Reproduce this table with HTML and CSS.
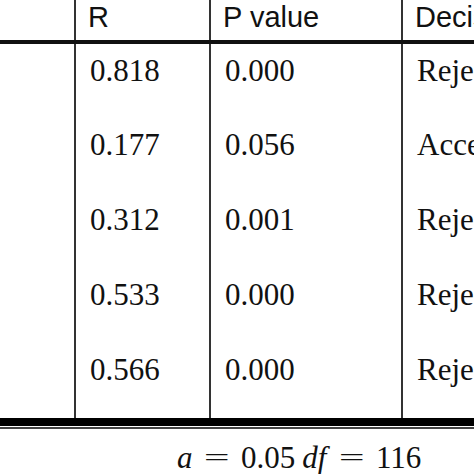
FILE: index.html
```html
<!DOCTYPE html>
<html lang="en">
<head>
    <meta charset="UTF-8">
    <title>Correlation test</title>
    <link rel="stylesheet" href="styles.css">
</head>
<body>
    <div class="stats-table">
        <!-- header -->
        <div class="row head">
            <div class="cell first"></div>
            <div class="cell col-r">R</div>
            <div class="cell col-p">P value</div>
            <div class="cell col-d">Decision</div>
        </div>

        <div class="row">
            <div class="cell first"></div>
            <div class="cell col-r">0.818</div>
            <div class="cell col-p">0.000</div>
            <div class="cell col-d">Reject</div>
        </div>
        <div class="row">
            <div class="cell first"></div>
            <div class="cell col-r">0.177</div>
            <div class="cell col-p">0.056</div>
            <div class="cell col-d">Accept</div>
        </div>
        <div class="row">
            <div class="cell first"></div>
            <div class="cell col-r">0.312</div>
            <div class="cell col-p">0.001</div>
            <div class="cell col-d">Reject</div>
        </div>
        <div class="row">
            <div class="cell first"></div>
            <div class="cell col-r">0.533</div>
            <div class="cell col-p">0.000</div>
            <div class="cell col-d">Reject</div>
        </div>
        <div class="row">
            <div class="cell first"></div>
            <div class="cell col-r">0.566</div>
            <div class="cell col-p">0.000</div>
            <div class="cell col-d">Reject</div>
        </div>

        <div class="rule-thick"></div>
        <div class="rule-thin"></div>
    </div>

    <div class="note">
        <span class="var">a</span>
        <span class="eq">=</span>
        <span class="num">0.05</span>
        <span class="var df">df</span>
        <span class="eq eq2">=</span>
        <span class="num last">116</span>
    </div>
</body>
</html>
```

FILE: styles.css
```css
* {
    margin: 0;
    padding: 0;
    box-sizing: border-box;
}
body {
    background-color: #ffffff;
    color: #111111;
    width: 474px;
    height: 474px;
    overflow: hidden;
    font-family: "Liberation Serif", "Times New Roman", serif;
}
.stats-table {
    width: 600px;
}
.row {
    display: flex;
    height: 74.8px;
    font-size: 31px;
    line-height: 34px;
    white-space: nowrap;
}
.row.head {
    height: 44px;
    border-bottom: 4px solid #111111;
    font-family: "Liberation Sans", Arial, sans-serif;
    font-size: 29px;
}
.cell {
    border-left: 2px solid #333333;
    padding: 9.5px 0 0 14px;
}
.head .cell {
    padding: 0 0 0 12px;
}
.cell.first {
    width: 74px;
    border-left: none;
    padding: 0;
}
.col-r {
    width: 135px;
}
.col-p {
    width: 192px;
}
.col-d {
    flex: 1;
}
.rule-thick {
    height: 8px;
    background-color: #000000;
}
.rule-thin {
    height: 2px;
    margin-top: 1px;
    background-color: #444444;
}
/* a = 0.05 df = 116 */
.note {
    display: flex;
    align-items: baseline;
    padding: 10px 0 0 177px;
    font-size: 31px;
    line-height: 34px;
    white-space: nowrap;
}
.var {
    font-style: italic;
}
.eq {
    margin-left: 10px;
    font-family: "DejaVu Sans", sans-serif;
    font-size: 34px;
    font-weight: 300;
}
.num {
    margin-left: 10px;
}
.df {
    margin-left: 7px;
}
.eq2 {
    margin-left: 11px;
}
.num.last {
    margin-left: 10px;
}
```
